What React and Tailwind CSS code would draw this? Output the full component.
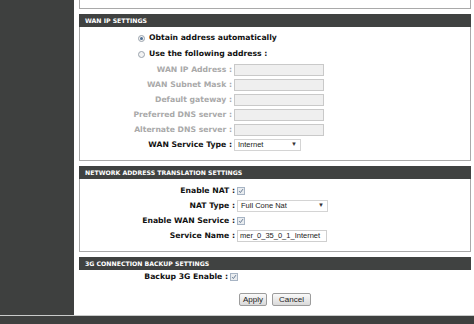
import React from "react";

const labelFont = { fontFamily: '"DejaVu Sans", Verdana, sans-serif' };

const Radio = ({ checked }) => (
  <span className="relative inline-block h-[7px] w-[7px] shrink-0 rounded-full border border-[#9aa3ad] bg-[#f3f3f3]">
    {checked && <span className="absolute left-[1px] top-[1px] h-[3px] w-[3px] rounded-full bg-[#4f6f95]" />}
  </span>
);

const Check = () => (
  <span className="relative inline-flex h-[8px] w-[8px] shrink-0 items-center justify-center border border-[#a7b4c4] bg-[#e9ecef]">
    <svg viewBox="0 0 8 8" className="h-[6px] w-[6px]">
      <path d="M1.5 4.2 L3.2 6 L6.6 1.5" fill="none" stroke="#5a6f8a" strokeWidth="1.2" />
    </svg>
  </span>
);

const TextBox = ({ value, disabled, w = "w-[90px]" }) => (
  <div
    className={`flex h-[12px] ${w} items-center border px-[2px] text-[7.5px] text-[#222] ${
      disabled ? "border-[#c9c9c9] bg-[#efefef]" : "border-[#cfcfcf] bg-white"
    }`}
    style={{ fontFamily: '"Liberation Sans", Arial, sans-serif' }}
  >
    {value}
  </div>
);

const Select = ({ value, w }) => (
  <div
    className={`flex h-[12px] ${w} items-center justify-between border border-[#d4d4d4] bg-white pl-[3px] pr-[3px] text-[7.5px] text-[#222]`}
    style={{ fontFamily: '"Liberation Sans", Arial, sans-serif' }}
  >
    <span>{value}</span>
    <span className="text-[6px] text-[#333]">▼</span>
  </div>
);

const Header = ({ title }) => (
  <div
    className="flex h-[13px] items-center bg-[#404241] pl-[6px] text-[6.2px] font-bold text-white"
    style={labelFont}
  >
    {title}
  </div>
);

const Row = ({ label, col, disabled, h = "h-[15px]", children }) => (
  <div className={`flex ${h} items-center`}>
    <div
      className={`${col} shrink-0 text-right text-[7.7px] font-bold ${disabled ? "text-[#a9a9a9]" : "text-[#111]"}`}
      style={labelFont}
    >
      {label}
    </div>
    <div className="ml-[2px] flex items-center">{children}</div>
  </div>
);

export default function App() {
  const wanFields = [
    "WAN IP Address :",
    "WAN Subnet Mask :",
    "Default gateway :",
    "Preferred DNS server :",
    "Alternate DNS server :",
  ];

  return (
    <div className="flex h-[324px] w-[474px] flex-col overflow-hidden bg-white">
      <div className="flex h-[315px]">
        <div className="w-[74px] shrink-0 bg-[#3e403f]" />
        <div className="flex flex-1 flex-col gap-[5px] pl-[5px] pr-[3px]">
          <div className="h-[9px] border-x border-b border-x-[#a9a9a9] border-b-[#a9a9a9]" />

          <div>
            <Header title="WAN IP SETTINGS" />
            <div className="h-[134px] border-x border-b border-[#a9a9a9] pt-[3px]">
              <div className="flex h-[16px] items-center gap-[4px] pl-[58px]">
                <Radio checked />
                <span className="text-[7.7px] font-bold text-[#111]" style={labelFont}>
                  Obtain address automatically
                </span>
              </div>
              <div className="flex h-[16px] items-center gap-[4px] pl-[58px]">
                <Radio />
                <span className="text-[7.7px] font-bold text-[#111]" style={labelFont}>
                  Use the following address :
                </span>
              </div>
              {wanFields.map((f) => (
                <Row key={f} label={f} col="w-[152px]" disabled>
                  <TextBox disabled />
                </Row>
              ))}
              <Row label="WAN Service Type :" col="w-[152px]">
                <Select value="Internet" w="w-[67px]" />
              </Row>
            </div>
          </div>

          <div>
            <Header title="NETWORK ADDRESS TRANSLATION SETTINGS" />
            <div className="h-[73px] border-x border-b border-[#a9a9a9] pt-[4px]">
              <Row label="Enable NAT :" col="w-[155px]">
                <Check />
              </Row>
              <Row label="NAT Type :" col="w-[155px]">
                <Select value="Full Cone Nat" w="w-[91px]" />
              </Row>
              <Row label="Enable WAN Service :" col="w-[155px]">
                <Check />
              </Row>
              <Row label="Service Name :" col="w-[155px]">
                <TextBox value="mer_0_35_0_1_Internet" />
              </Row>
            </div>
          </div>

          <div>
            <Header title="3G CONNECTION BACKUP SETTINGS" />
            <Row label="Backup 3G Enable :" col="w-[149px]" h="h-[14px]">
              <Check />
            </Row>
            <div
              className="mt-[9px] flex gap-[5px] pl-[160px] text-[8px] text-[#222]"
              style={{ fontFamily: '"Liberation Sans", Arial, sans-serif' }}
            >
              <button className="h-[13px] w-[28px] rounded-[2px] border border-[#9c9c9c] bg-gradient-to-b from-[#fafafa] to-[#d9d9d9] leading-none">
                Apply
              </button>
              <button className="h-[13px] w-[39px] rounded-[2px] border border-[#9c9c9c] bg-gradient-to-b from-[#fafafa] to-[#d9d9d9] leading-none">
                Cancel
              </button>
            </div>
          </div>
        </div>
      </div>
      <div className="h-[9px] border-t border-[#c9cbca] bg-[#3e403f]" />
    </div>
  );
}
